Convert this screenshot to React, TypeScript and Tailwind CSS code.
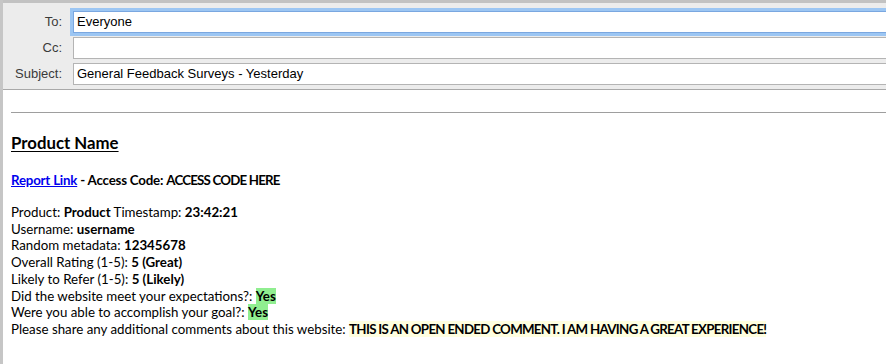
const BODY_FONT = { fontFamily: "Lato, 'Open Sans', sans-serif" };

function Field({ label, value, focused }: { label: string; value?: string; focused?: boolean }) {
  return (
    <div className="flex h-[22px] items-center">
      <div className="w-[60px] pr-[1px] text-right text-[13px] text-[#3a3a3a]">{label}</div>
      <div
        className={`ml-[10px] flex h-[22px] flex-1 items-center border border-r-0 bg-white pl-[3px] text-[13px] text-black ${
          focused ? "border-[#7aa7e0] shadow-[0_0_0_3px_#9cc6f3]" : "border-[#b4b4b4]"
        }`}
      >
        {value}
      </div>
    </div>
  );
}

export default function App() {
  return (
    <div
      className="h-[364px] w-[886px] overflow-hidden border-l-[3px] border-[#c6c6c6] bg-white"
      style={{ fontFamily: "'Liberation Sans', Arial, sans-serif" }}
    >
      <header className="flex flex-col gap-[4px] border-t-[3px] border-b border-t-[#c2c2c2] border-b-[#a9a9a9] bg-[#ececec] pb-[4px] pt-[8px]">
        <Field label="To:" value="Everyone" focused />
        <Field label="Cc:" />
        <Field label="Subject:" value="General Feedback Surveys - Yesterday" />
      </header>

      <main className="pl-[8px] pt-[22px] text-[13.3px] text-black" style={BODY_FONT}>
        <div className="border-t border-[#9e9e9e]" />

        <h1 className="mt-[19px] text-[16.8px] font-bold leading-[22px] underline underline-offset-2">Product Name</h1>

        <p className="mt-[17px] leading-[18px] tracking-[-0.2px]">
          <a href="#" className="font-bold text-[#0000ee] underline">
            Report Link
          </a>
          <span className="font-bold">
            {" "}- Access Code: <span className="tracking-[-0.8px]">ACCESS CODE HERE</span>
          </span>
        </p>

        <div className="mt-[15px] leading-[16.7px]">
          <div>
            Product: <b>Product</b> Timestamp: <b>23:42:21</b>
          </div>
          <div>
            Username: <b>username</b>
          </div>
          <div>
            Random metadata: <b>12345678</b>
          </div>
          <div>
            Overall Rating (1-5): <b>5 (Great)</b>
          </div>
          <div>
            Likely to Refer (1-5): <b>5 (Likely)</b>
          </div>
          <div>
            Did the website meet your expectations?: <b className="bg-[#90ee90]">Yes</b>
          </div>
          <div>
            Were you able to accomplish your goal?: <b className="bg-[#90ee90]">Yes</b>
          </div>
          <div className="whitespace-nowrap">
            Please share any additional comments about this website:{" "}
            <b className="bg-[#ffffe0] tracking-[-0.7px]">
              THIS IS AN OPEN ENDED COMMENT. I AM HAVING A GREAT EXPERIENCE!
            </b>
          </div>
        </div>
      </main>
    </div>
  );
}
